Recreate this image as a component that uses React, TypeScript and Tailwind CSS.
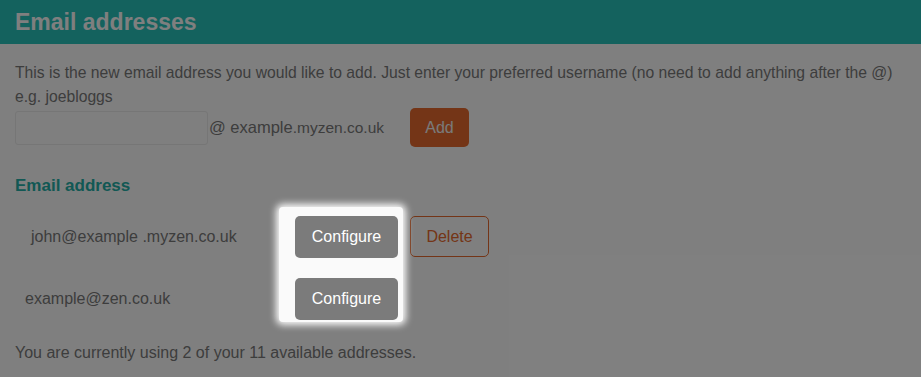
export default function App() {
  return (
    <div className="relative h-[377px] w-full overflow-hidden bg-white font-['Liberation_Sans',Arial,sans-serif] text-[#7a7a7a]">
      {/* page */}
      <div className="flex h-[44px] items-center bg-[#28c4bc] px-[15px]">
        <h1 className="text-[23px] font-bold text-white">Email addresses</h1>
      </div>

      <div className="px-[15px] pt-[17px]">
        <p className="text-[15.7px] leading-[24px]">
          This is the new email address you would like to add. Just enter your preferred username (no need to add anything after the @) e.g. joebloggs
        </p>

        <div className="mt-[-1px] flex items-center">
          <input className="h-[34px] w-[193px] rounded-[3px] border border-[#ececec] bg-white" />
          <span className="ml-[1px] text-[16.5px]">
            @ example<span className="text-[15.5px]">.myzen.co.uk</span>
          </span>
          <button className="ml-[26px] h-[39px] w-[59px] rounded-[5px] bg-[#e86b2e] text-[16px] text-[#f4f4f4]">
            Add
          </button>
        </div>

        <h2 className="mt-[26px] text-[17px] font-bold text-[#25b0a8]">Email address</h2>

        <div className="mt-[17px] flex flex-col gap-[20px]">
          <div className="flex items-center">
            <span className="w-[280px] pl-[16px] text-[16px]">john@example .myzen.co.uk</span>
            <button className="relative z-30 h-[42px] w-[103px] rounded-[5px] bg-[#7b7b7b] text-[16px] text-white">
              Configure
            </button>
            <button className="ml-[12px] h-[41px] w-[79px] rounded-[5px] border border-[#e86b2e] text-[16px] text-[#e86b2e]">
              Delete
            </button>
          </div>
          <div className="flex items-center">
            <span className="w-[280px] pl-[10px] text-[16px]">example@zen.co.uk</span>
            <button className="relative z-30 h-[42px] w-[103px] rounded-[5px] bg-[#7b7b7b] text-[16px] text-white">
              Configure
            </button>
          </div>
        </div>

        <p className="mt-[21px] text-[16px]">You are currently using 2 of your 11 available addresses.</p>
      </div>

      {/* tour overlay */}
      <div className="absolute inset-0 z-10 bg-black/50" />
      <div className="absolute left-[279px] top-[207px] z-20 h-[115px] w-[124px] rounded-[4px] bg-[#fafafa] shadow-[0_0_7px_3px_#fafafa]" />
    </div>
  );
}
